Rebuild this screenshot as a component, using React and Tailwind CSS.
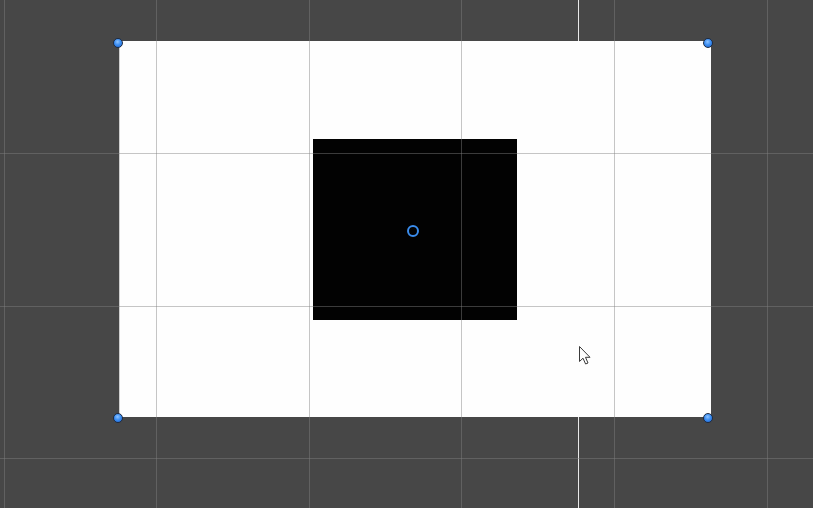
import React from "react";

const gridX = [4, 156, 309, 461, 614, 767];
const gridY = [153, 306, 458];

const corners = [
  { id: "tl", cls: "left-[113px] top-[38px]" },
  { id: "tr", cls: "left-[703px] top-[38px]" },
  { id: "bl", cls: "left-[113px] top-[413px]" },
  { id: "br", cls: "left-[703px] top-[413px]" },
];

function Handle({ cls }) {
  return (
    <div
      className={`absolute ${cls} h-[10px] w-[10px] rounded-full border border-[#1c2b44] bg-[radial-gradient(circle_at_45%_35%,#8fc4ff_0%,#3d8ff2_45%,#1b62d0_100%)]`}
    />
  );
}

function Cursor() {
  return (
    <svg
      className="absolute left-[578px] top-[345px]"
      width="14"
      height="21"
      viewBox="0 0 14 21"
    >
      <path
        d="M1.5 1.5 L1.5 16.5 L5 13.2 L7.6 19 L10 18 L7.5 12.3 L12 12.3 Z"
        fill="#ffffff"
        stroke="#3a3a3a"
        strokeWidth="1"
        strokeLinejoin="miter"
      />
    </svg>
  );
}

export default function App() {
  return (
    <div className="relative h-[508px] w-[813px] overflow-hidden bg-[#474747]">
      {/* scene camera line */}
      <div className="absolute left-[578px] top-0 h-full w-px bg-[#e8e8e8]" />

      {/* canvas */}
      <div className="absolute left-[119px] top-[41px] h-[376px] w-[592px] border-l border-[#cfcfcf] bg-[#fefefe]" />

      {/* image */}
      <div className="absolute left-[313px] top-[139px] h-[181px] w-[204px] bg-[#020202]" />

      {/* grid overlay */}
      <svg
        className="pointer-events-none absolute inset-0"
        width="813"
        height="508"
        viewBox="0 0 813 508"
      >
        {gridX.map((x) => (
          <rect key={"x" + x} x={x} y="0" width="1" height="508" fill="rgba(128,128,128,0.45)" />
        ))}
        {gridY.map((y) => (
          <rect key={"y" + y} x="0" y={y} width="813" height="1" fill="rgba(128,128,128,0.45)" />
        ))}
      </svg>

      {/* rect handles */}
      {corners.map((c) => (
        <Handle key={c.id} cls={c.cls} />
      ))}

      {/* pivot */}
      <div className="absolute left-[407px] top-[225px] h-[12px] w-[12px] rounded-full border-2 border-[#3a8cec]" />

      <Cursor />
    </div>
  );
}
